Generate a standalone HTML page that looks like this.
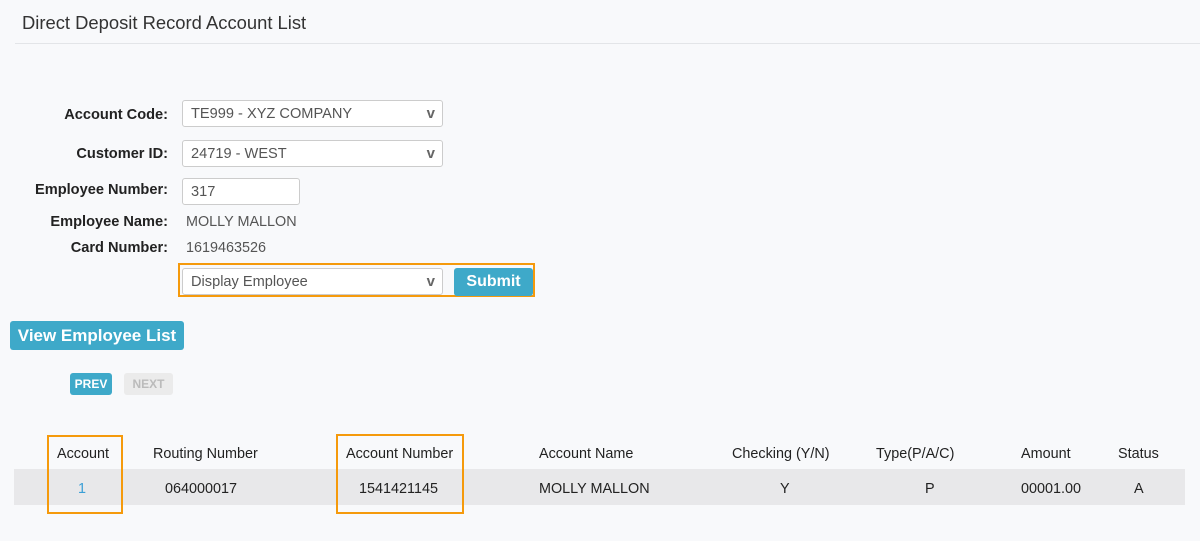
<!DOCTYPE html>
<html><head><meta charset="utf-8"><style>
body{margin:0;width:1200px;height:541px;background:#f8f9fb;font-family:"Liberation Sans",sans-serif;position:relative;overflow:hidden;color:#333}
.a{position:absolute;white-space:nowrap}
.title{left:22px;top:12px;font-size:18.4px;color:#333}
.hr{left:15px;top:43px;width:1185px;height:1px;background:#e3e5e8}
.lbl{font-size:14.6px;font-weight:bold;color:#222;text-align:right;width:168px;left:0}
.val{font-size:14.4px;color:#555}
.sel{background:#fff;border:1px solid #ccc;border-radius:3px;height:27px;box-sizing:border-box;font-size:14.6px;color:#555;padding:5px 8px}
.sel .ch{position:absolute;right:7px;top:4px;font-size:15px;color:#666;font-weight:bold}
.btn{background:#3ea9c9;color:#fff;font-weight:bold;border-radius:3px;text-align:center}
.or{border:2px solid #f59a0c}
.th{font-size:14.4px;color:#222}
.td{font-size:14.4px;color:#222}
</style></head><body>
<div class="a title">Direct Deposit Record Account List</div>
<div class="a hr"></div>

<div class="a lbl" style="top:107px">Account Code:</div>
<div class="a sel" style="left:182px;top:100px;width:261px">TE999 - XYZ COMPANY<span class="ch">v</span></div>
<div class="a lbl" style="top:146px">Customer ID:</div>
<div class="a sel" style="left:182px;top:140px;width:261px">24719 - WEST<span class="ch">v</span></div>
<div class="a lbl" style="top:182px">Employee Number:</div>
<div class="a sel" style="left:182px;top:178px;width:118px">317</div>
<div class="a lbl" style="top:214px">Employee Name:</div>
<div class="a val" style="left:186px;top:214px">MOLLY MALLON</div>
<div class="a lbl" style="top:240px">Card Number:</div>
<div class="a val" style="left:186px;top:240px">1619463526</div>

<div class="a or" style="left:178px;top:263px;width:357px;height:34px;box-sizing:border-box"></div>
<div class="a sel" style="left:182px;top:268px;width:261px">Display Employee<span class="ch">v</span></div>
<div class="a btn" style="left:454px;top:268px;width:79px;height:28px;line-height:28px;font-size:16px">Submit</div>

<div class="a btn" style="left:10px;top:321px;width:174px;height:29px;line-height:29px;font-size:17px">View Employee List</div>
<div class="a btn" style="left:70px;top:373px;width:42px;height:22px;line-height:22px;font-size:12px">PREV</div>
<div class="a" style="left:124px;top:373px;width:49px;height:22px;line-height:22px;font-size:12px;background:#ebebeb;color:#bbb;font-weight:bold;text-align:center;border-radius:3px">NEXT</div>

<div class="a" style="left:14px;top:469px;width:1171px;height:36px;background:#e8e8ea"></div>
<div class="a th" style="left:57px;top:446px">Account</div>
<div class="a th" style="left:153px;top:446px">Routing Number</div>
<div class="a th" style="left:346px;top:446px">Account Number</div>
<div class="a th" style="left:539px;top:446px">Account Name</div>
<div class="a th" style="left:732px;top:446px">Checking (Y/N)</div>
<div class="a th" style="left:876px;top:446px">Type(P/A/C)</div>
<div class="a th" style="left:1021px;top:446px">Amount</div>
<div class="a th" style="left:1118px;top:446px">Status</div>

<div class="a td" style="left:78px;top:481px;color:#3a9fd6">1</div>
<div class="a td" style="left:165px;top:481px">064000017</div>
<div class="a td" style="left:359px;top:481px">1541421145</div>
<div class="a td" style="left:539px;top:481px">MOLLY MALLON</div>
<div class="a td" style="left:780px;top:481px">Y</div>
<div class="a td" style="left:925px;top:481px">P</div>
<div class="a td" style="left:1021px;top:481px">00001.00</div>
<div class="a td" style="left:1134px;top:481px">A</div>

<div class="a or" style="left:47px;top:435px;width:76px;height:79px;box-sizing:border-box"></div>
<div class="a or" style="left:336px;top:434px;width:128px;height:80px;box-sizing:border-box"></div>
</body></html>
